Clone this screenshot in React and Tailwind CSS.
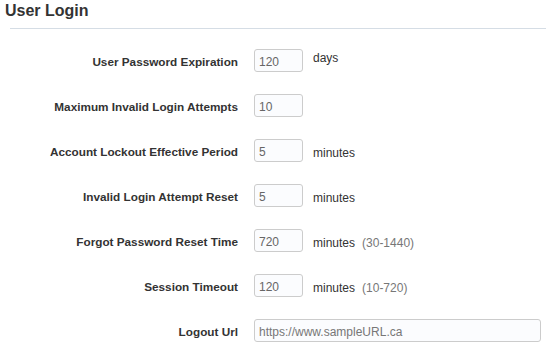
import React from "react";

const rows = [
  { label: "User Password Expiration", value: "120", unit: "days", raised: true },
  { label: "Maximum Invalid Login Attempts", value: "10" },
  { label: "Account Lockout Effective Period", value: "5", unit: "minutes" },
  { label: "Invalid Login Attempt Reset", value: "5", unit: "minutes" },
  { label: "Forgot Password Reset Time", value: "720", unit: "minutes", range: "(30-1440)" },
  { label: "Session Timeout", value: "120", unit: "minutes", range: "(10-720)" },
];

const Field = ({ label, children }) => (
  <div className="flex items-center h-[23px] mb-[22px]">
    <label className="w-[238px] shrink-0 mt-[3px] text-right text-[11.75px] leading-4 font-bold text-[#333]">
      {label}
    </label>
    <div className="ml-4 flex items-center h-full">{children}</div>
  </div>
);

const App = () => {
  return (
    <div
      className="w-[547px] h-[348px] bg-white overflow-hidden"
      style={{ fontFamily: '"Liberation Sans", Arial, sans-serif' }}
    >
      <h1 className="pl-[5px] pt-[1px] text-[16px] leading-5 font-bold text-[#333]">
        User Login
      </h1>
      <div className="ml-[10px] mr-[1px] mt-[7px] border-t border-[#d5dde5]"></div>
      <form className="mt-5">
        {rows.map((row) => (
          <Field key={row.label} label={row.label}>
            <input
              type="text"
              defaultValue={row.value}
              className="w-[49px] h-[23px] px-[4px] pt-[3px] text-[12px] text-[#666] bg-[#fbfcfe] border border-[#cccccc] rounded-[3px] outline-none"
            />
            {row.unit && (
              <span
                className={
                  row.raised
                    ? "ml-[10px] self-start mt-[1px] text-[12px] leading-4 text-[#333]"
                    : "ml-[10px] mt-[4px] text-[12px] leading-4 text-[#333]"
                }
              >
                {row.unit}
              </span>
            )}
            {row.range && (
              <span className="ml-[7px] mt-[4px] text-[12px] leading-4 text-[#777]">
                {row.range}
              </span>
            )}
          </Field>
        ))}
        <Field label="Logout Url">
          <input
            type="text"
            placeholder="https://www.sampleURL.ca"
            className="w-[287px] h-[23px] px-[4px] pt-[2px] text-[12px] text-[#666] placeholder:text-[#777] bg-[#fbfcfe] border border-[#cccccc] rounded-[3px] outline-none"
          />
        </Field>
      </form>
    </div>
  );
};

export default App;
